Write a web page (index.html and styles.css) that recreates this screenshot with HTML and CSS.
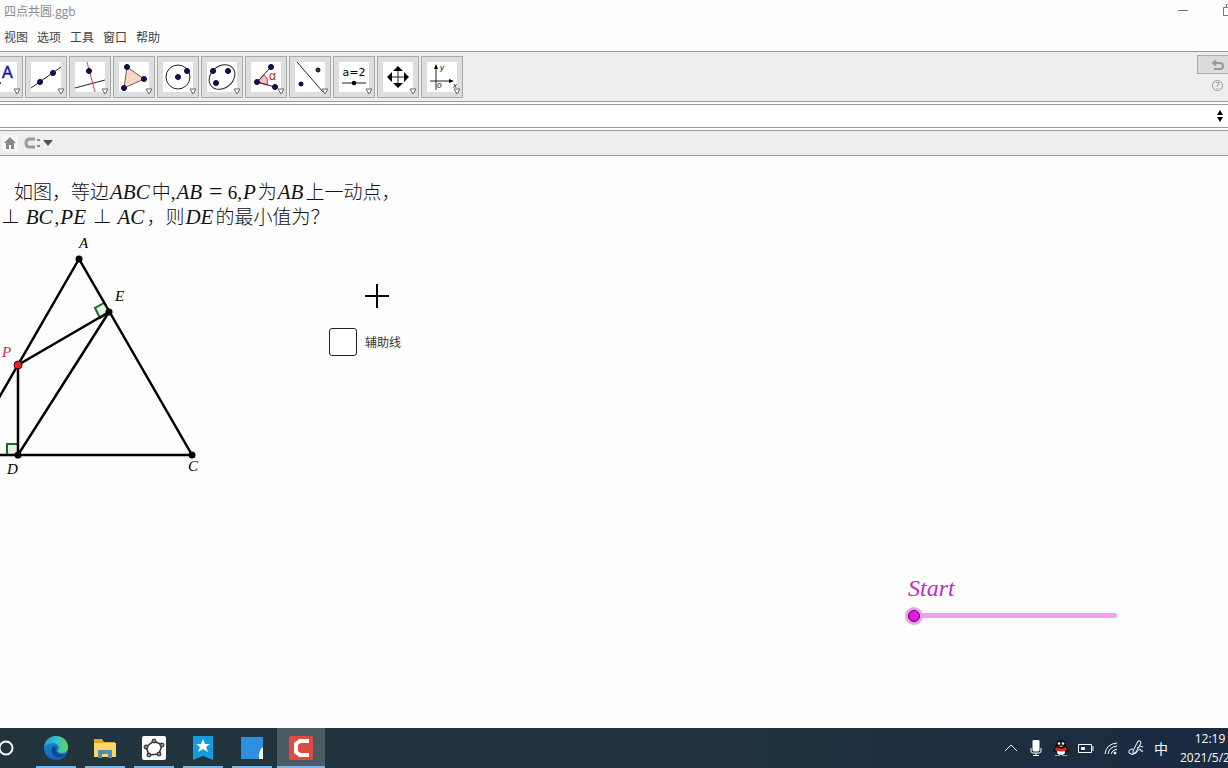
FILE: index.html
```
<!DOCTYPE html>
<html lang="zh-CN">
<head>
    <meta charset="utf-8">
    <title>四点共圆.ggb</title>
    <link rel="stylesheet" href="styles.css">
</head>
<body>
    <header class="titlebar">
        <span class="file-name">四点共圆.ggb</span>
        <div class="window-buttons">
            <button aria-label="最小化"><svg width="12" height="12"><path d="M1 6.500h10" /></svg></button>
            <button aria-label="还原"><svg width="12" height="12"><path d="M1.500 3.500h8v8h-8zM4.500 3v-2.500h8v8h-3" /></svg></button>
        </div>
    </header>

    <nav class="menu">
        <a href="#">视图</a>
        <a href="#">选项</a>
        <a href="#">工具</a>
        <a href="#">窗口</a>
        <a href="#">帮助</a>
    </nav>

    <div class="toolbar">
        <div class="tools">
            <button class="tool" aria-label="文本">
                <svg class="icon" viewBox="0 0 30 30"><text class="letter" x="15" y="16">A</text><circle cx="13" cy="21" r="1" /></svg>
                <svg class="more" viewBox="0 0 8 7"><path d="M1 1h6L4 6z" /></svg>
            </button>
            <button class="tool" aria-label="直线">
                <svg class="icon" viewBox="0 0 30 30"><path d="M0 26L30 5" /><circle class="dot" cx="9" cy="20" r="2.500" /><circle class="dot" cx="22" cy="11" r="2.500" /></svg>
                <svg class="more" viewBox="0 0 8 7"><path d="M1 1h6L4 6z" /></svg>
            </button>
            <button class="tool" aria-label="垂线">
                <svg class="icon" viewBox="0 0 30 30"><path d="M0 26L30 18" /><path class="red" d="M12 0L20 30" /><circle class="dot" cx="14" cy="9" r="2.500" /></svg>
                <svg class="more" viewBox="0 0 8 7"><path d="M1 1h6L4 6z" /></svg>
            </button>
            <button class="tool" aria-label="多边形">
                <svg class="icon" viewBox="0 0 30 30"><path class="area" d="M8 5L25 17L5 26z" /><circle class="dot" cx="8" cy="5" r="2.500" /><circle class="dot" cx="25" cy="17" r="2.500" /><circle class="dot" cx="5" cy="26" r="2.500" /></svg>
                <svg class="more" viewBox="0 0 8 7"><path d="M1 1h6L4 6z" /></svg>
            </button>
            <button class="tool" aria-label="圆">
                <svg class="icon" viewBox="0 0 30 30"><circle class="line" cx="15" cy="15" r="12" /><circle class="dot" cx="15" cy="15" r="2.500" /><circle class="dot" cx="24" cy="9" r="2.500" /></svg>
                <svg class="more" viewBox="0 0 8 7"><path d="M1 1h6L4 6z" /></svg>
            </button>
            <button class="tool" aria-label="椭圆">
                <svg class="icon" viewBox="0 0 30 30"><ellipse class="line" cx="15" cy="15" rx="14" ry="11" transform="rotate(-40 15 15)" /><circle class="dot" cx="6" cy="9" r="2.500" /><circle class="dot" cx="21" cy="9" r="2.500" /><circle class="dot" cx="9" cy="21" r="2.500" /></svg>
                <svg class="more" viewBox="0 0 8 7"><path d="M1 1h6L4 6z" /></svg>
            </button>
            <button class="tool" aria-label="角度">
                <svg class="icon" viewBox="0 0 30 30"><path class="angle" d="M6 20L13 13Q18 16 16 23z" /><path d="M20 5L6 20L24 25" /><circle class="dot" cx="20" cy="5" r="2.500" /><circle class="dot" cx="6" cy="20" r="2.500" /><circle class="dot" cx="24" cy="25" r="2.500" /><text class="alpha" x="18" y="18">α</text></svg>
                <svg class="more" viewBox="0 0 8 7"><path d="M1 1h6L4 6z" /></svg>
            </button>
            <button class="tool" aria-label="轴对称">
                <svg class="icon" viewBox="0 0 30 30"><path d="M2 0L28 30" /><circle class="dot" cx="6" cy="22" r="2" /><circle class="dot image" cx="23" cy="8" r="2" /></svg>
                <svg class="more" viewBox="0 0 8 7"><path d="M1 1h6L4 6z" /></svg>
            </button>
            <button class="tool" aria-label="滑动条">
                <svg class="icon" viewBox="0 0 30 30"><text class="value" x="15" y="14">a=2</text><path d="M3 21h24" /><circle cx="15" cy="21" r="2.300" /></svg>
                <svg class="more" viewBox="0 0 8 7"><path d="M1 1h6L4 6z" /></svg>
            </button>
            <button class="tool" aria-label="移动视图">
                <svg class="icon" viewBox="0 0 30 30"><path d="M15 6v19M6 15h19" /><path class="fill" d="M15 4l5 5h-10zM15 26l5-5h-10zM4 15l5-5v10zM26 15l-5-5v10z" /></svg>
                <svg class="more" viewBox="0 0 8 7"><path d="M1 1h6L4 6z" /></svg>
            </button>
            <button class="tool" aria-label="坐标轴">
                <svg class="icon" viewBox="0 0 30 30"><path d="M9 4v24M3 19h22" /><path class="fill" d="M9 2l2 5h-4zM27 19l-5-2v4z" /><text class="axis" x="13" y="8">y</text><text class="axis" x="10" y="26">0</text><text class="axis" x="26" y="26">x</text></svg>
                <svg class="more" viewBox="0 0 8 7"><path d="M1 1h6L4 6z" /></svg>
            </button>
        </div>
        <div class="side-tools">
            <button class="undo" aria-label="撤销"><svg width="12" height="10"><path d="M1 3h7q3 0 3 3t-3 3h-6M4 .5L1 3l3 2.500" /></svg></button>
            <button class="help" aria-label="帮助">?</button>
        </div>
    </div>

    <div class="command">
        <input type="text" aria-label="输入">
        <button aria-label="历史"><svg width="6" height="12"><path d="M0 5l3-5 3 5zM0 7h6l-3 5z" /></svg></button>
    </div>

    <div class="stylebar">
        <button aria-label="标准视图"><svg width="12" height="12"><path d="M6 0L12 6h-2v6H7V8H5v4H2V6H0z" /></svg></button>
        <button class="snap" aria-label="吸附">
            <svg width="28" height="12"><path class="magnet" d="M10 2H5q-4 0-4 4t4 4h5" /><path d="M12 2h3v2h-3zM12 8h3v2h-3z" /><path class="arrow" d="M18 3h10l-5 6z" /></svg>
        </button>
    </div>

    <main class="canvas">
        <svg class="figure" viewBox="0 0 230 340">
            <g class="right-angle">
                <path d="M104 147l-9 5 5 10 10-6" />
                <path d="M7 299v-11h11v11z" />
            </g>
            <g class="segments">
                <path d="M79 103L-34 299H192z" />
                <path d="M109 156L18 209V299z" />
            </g>
            <circle cx="79" cy="103" r="3.500" />
            <circle cx="109" cy="156" r="3.500" />
            <circle cx="18" cy="299" r="3.500" />
            <circle cx="192" cy="299" r="3.500" />
            <circle class="moving" cx="18" cy="209" r="4" />
            <text x="79" y="92">A</text>
            <text x="115" y="145">E</text>
            <text class="moving-label" x="2" y="201">P</text>
            <text x="7" y="318">D</text>
            <text x="188" y="315">C</text>
        </svg>

        <div class="problem">
            <p class="indent">如图，等边<i>ABC</i>中,<i>AB</i><span class="sign">=</span>6,<i>P</i>为<i>AB</i>上一动点，</p>
            <p>⊥ <i>BC</i>,<i>PE</i> ⊥ <i>AC</i>，则<i>DE</i>的最小值为？</p>
        </div>

        <svg class="cursor" width="24" height="24"><path d="M12 0v24M0 12h24" /></svg>

        <label class="helper-lines"><input type="checkbox">辅助线</label>

        <div class="slider">
            <label for="start">Start</label>
            <input type="range" id="start" min="0" max="100" value="0">
        </div>
    </main>

    <footer class="taskbar">
        <div class="apps">
            <button class="app" aria-label="Cortana"><svg width="24" height="24"><circle class="ring" cx="11" cy="12" r="6.500" /></svg></button>
            <button class="app open" aria-label="Edge">
                <svg width="24" height="24">
                    <defs>
                        <linearGradient id="edge-top" x1="0" x2="1"><stop offset="0" stop-color="#229ddb" /><stop offset=".5" stop-color="#31c3c7" /><stop offset="1" stop-color="#64d35d" /></linearGradient>
                        <linearGradient id="edge-low" y1="0" y2="1" x2="0"><stop offset="0" stop-color="#1c91d8" /><stop offset="1" stop-color="#1262b5" /></linearGradient>
                    </defs>
                    <circle cx="12" cy="12" r="12" fill="url(#edge-low)" />
                    <path d="M0 11C1 4 6 0 12 0c7 0 12 5 12 11 0 4-3 6-6 6-3 0-5-1-4-3 2-3 0-6-4-7-4 0-8 1-10 4z" fill="url(#edge-top)" />
                    <path d="M9 10c-3 4-1 10 4 11 3 1 6 0 9-3-4 2-10 0-10-4 0-2 1-3 1-3z" fill="#12458f" />
                </svg>
            </button>
            <button class="app open" aria-label="文件资源管理器">
                <svg width="24" height="24"><path d="M1 3h8l2 3h11v15H1z" fill="#dfa92e" /><path d="M1 7h22v14H1z" fill="#fbd66b" /><path d="M5 22v-8h14v8h-4v-4H9v4z" fill="#4c8eb5" /></svg>
            </button>
            <button class="app open" aria-label="GeoGebra">
                <svg width="24" height="24"><rect width="24" height="24" rx="2" fill="#fff" /><path d="M12 5l8 4-3 9-10 1-3-8z" fill="none" stroke="#333" stroke-width="1.500" /><g fill="#8583b5" stroke="#222"><circle cx="12" cy="5" r="2" /><circle cx="20" cy="9" r="2" /><circle cx="17" cy="18" r="2" /><circle cx="7" cy="19" r="2" /><circle cx="4" cy="11" r="2" /></g></svg>
            </button>
            <button class="app open" aria-label="收藏">
                <svg width="24" height="24"><path d="M2 0h20v24l-10-4-10 4z" fill="#159bd9" /><path d="M12 3l2 5h5l-4 3 2 5-5-3-5 3 2-5-4-3h5z" fill="#fff" /></svg>
            </button>
            <button class="app open" aria-label="便笺">
                <svg width="24" height="24"><path d="M1 1h22v10q-5 2-4 12H1z" fill="#2d8fdf" /><path d="M23 11v12h-4q-1-10 4-12z" fill="#f3f8fc" /></svg>
            </button>
            <button class="app open active" aria-label="Camtasia">
                <svg width="24" height="24"><rect width="24" height="24" rx="2" fill="#df4b40" /><path d="M20 5H11L7 8v8l4 3h9" fill="none" stroke="#fff" stroke-width="4" /></svg>
            </button>
        </div>

        <div class="tray">
            <button aria-label="显示隐藏的图标"><svg width="16" height="16"><path d="M2 11l6-6 6 6" /></svg></button>
            <button aria-label="麦克风"><svg width="16" height="16"><rect class="solid" x="5" y="0" width="6" height="11" rx="1" /><path d="M3 8v3q0 2 2 2h6q2 0 2-2V8M8 13v3M5 15.500h6" /></svg></button>
            <button aria-label="QQ">
                <svg width="16" height="16"><path d="M8 0c3 0 5 2 5 5l3 6-3 1-2 4H5l-2-4-3-1 3-6c0-3 2-5 5-5z" fill="#0c0b10" stroke="none" /><ellipse cx="8" cy="12" rx="4" ry="3" fill="#fff" stroke="none" /><path d="M3 7q5 3 10 0l1 3q-6 3-12 0z" fill="#d82d33" stroke="none" /><circle cx="6" cy="3.500" r="1.300" fill="#fff" stroke="none" /><circle cx="10" cy="3.500" r="1.300" fill="#fff" stroke="none" /><path d="M5 6q3-1 6 0l-3 1z" fill="#f3a01e" stroke="none" /><path d="M2 15h5v1H2zM9 15h5v1H9z" fill="#e99730" stroke="none" /></svg>
            </button>
            <button aria-label="电池"><svg width="16" height="16"><path d="M.5 4.500h13v8h-13zM15 6v5" /><path class="solid" d="M3.500 7.500h3v2h-3z" /></svg></button>
            <button aria-label="网络"><svg width="16" height="16"><path d="M2 14Q3 4 14 3M5 14q1-7 9-8M8 14q1-4 6-5" /><circle class="solid" cx="12" cy="13" r="1" /></svg></button>
            <button aria-label="手写笔"><svg width="16" height="16"><path d="M5 11L10 1q3-1 3 2L8 12l-3 2zM5 9q-5 0-4 4 3 3 7 0 4-6 5-3-1 2 2 1M9 8q4-3 6-1" /></svg></button>
            <button class="ime">中</button>
            <div class="clock">
                <time>12:19</time>
                <time>2021/5/2</time>
            </div>
        </div>
    </footer>
</body>
</html>
```
FILE: styles.css
```
* {
    box-sizing: border-box;
}

body {
    margin: 0;
    min-height: 100vh;
    display: flex;
    flex-direction: column;
    overflow: hidden;
    background-color: #fdfdfd;
    color: #333;
    font-family: "Open Sans", "Noto Sans CJK SC", sans-serif;
    font-size: 12px;
}

button {
    margin: 0;
    padding: 0;
    border: none;
    background: none;
    color: inherit;
    font: inherit;
}

svg {
    display: block;
}

/* title and menu */
.titlebar {
    display: flex;
    justify-content: space-between;
    height: 24px;
    padding-left: 4px;
    line-height: 23px;
    color: #8b8b8b;
}

.file-name {
    font-size: 12px;
}

.window-buttons {
    display: flex;
    gap: 33px;
    height: 20px;
    margin-right: -6px;
}

.window-buttons svg {
    fill: none;
    stroke: #777;
}

.menu {
    display: flex;
    gap: 9px;
    height: 27px;
    padding-left: 4px;
    line-height: 28px;
}

.menu a {
    color: #444;
    text-decoration: none;
}

/* tool buttons */
.toolbar {
    display: flex;
    justify-content: space-between;
    height: 51px;
    border: 1px solid #999;
    border-width: 1px 0;
    background-color: #eee;
}

.tools {
    display: flex;
    gap: 2px;
    margin-left: -19px;
    padding-top: 4px;
}

.tool {
    position: relative;
    width: 42px;
    height: 42px;
    padding: 5px;
    border: 1px solid #aaa;
    background-color: #dedede;
}

.icon {
    width: 30px;
    height: 30px;
    background-color: #fff;
    overflow: hidden;
}

.icon path, .icon .line {
    fill: none;
    stroke: #222;
}

.icon .dot {
    fill: #10106a;
    stroke: #050528;
}

.icon .image {
    fill: #6e2028;
}

.icon .red {
    stroke: #d0485c;
}

.icon .area {
    fill: #f5d8c8;
    stroke: #8a5540;
}

.icon .angle {
    fill: #f7bcc8;
    stroke: #b04454;
}

.icon .fill {
    fill: #000;
    stroke: none;
}

.icon text {
    font-family: "Liberation Sans", sans-serif;
}

.icon .letter {
    font-size: 16px;
    fill: #1515a0;
    stroke: #1515a0;
    stroke-width: 0.5;
}

.icon .alpha {
    font-size: 12px;
    fill: #c02020;
}

.icon .value {
    font-family: "DejaVu Sans", sans-serif;
    font-size: 11px;
    text-anchor: middle;
}

.icon .axis {
    font-size: 8px;
    font-style: italic;
}

.more {
    position: absolute;
    right: 1px;
    bottom: 2px;
    width: 8px;
    height: 7px;
    fill: #fff;
    stroke: #666;
}

.side-tools {
    display: flex;
    flex-direction: column;
    gap: 4px;
    width: 31px;
    padding-top: 3px;
}

.undo {
    display: flex;
    align-items: center;
    height: 19px;
    padding-left: 14px;
    border: 1px solid #aaa;
    border-right: none;
    background-color: #dcdcdc;
}

.undo svg {
    fill: none;
    stroke: #999;
    stroke-width: 2;
}

.help {
    width: 11px;
    height: 11px;
    margin: 2px 0 0 15px;
    border: 1px solid #999;
    border-radius: 50%;
    color: #777;
    font-size: 9px;
    line-height: 9px;
}

/* input row */
.command {
    display: flex;
    height: 24px;
    margin: 2px 0;
    border: 1px solid #999;
    border-width: 1px 0;
    background-color: #fff;
}

.command input {
    flex: 1;
    border: none;
    outline: none;
    background: none;
}

.command button {
    padding: 0 5px;
}

.stylebar {
    display: flex;
    align-items: center;
    gap: 5px;
    height: 26px;
    padding-left: 2px;
    border: 1px solid #999;
    border-width: 1px 0;
    background-color: #eee;
}

.stylebar button {
    padding: 2px;
    background-color: #f8f8f8;
}

.stylebar .snap {
    background: none;
}

.stylebar svg {
    fill: #888;
    overflow: visible;
}

.stylebar .magnet {
    fill: none;
    stroke: #999;
    stroke-width: 3;
}

.stylebar .arrow {
    fill: #555;
}

/* drawing area */
.canvas {
    position: relative;
    flex: 1;
    overflow: hidden;
}

.figure {
    position: absolute;
    top: 0;
    left: 0;
    width: 230px;
    height: 340px;
    font-family: "Liberation Serif", serif;
    font-size: 15px;
    font-style: italic;
}

.segments {
    fill: none;
    stroke: #000;
    stroke-width: 2.5;
}

.right-angle {
    fill: #e6f0e6;
    stroke: #176b22;
    stroke-width: 2;
}

.moving {
    fill: #e82222;
    stroke: #400;
}

.moving-label {
    fill: #c8323c;
}

.problem {
    position: absolute;
    top: 23px;
    left: 1px;
    color: #111;
    font-family: "Liberation Serif", "Noto Sans CJK SC", serif;
    font-size: 19px;
    white-space: nowrap;
}

.problem p {
    margin: 0;
    font-weight: 300;
    line-height: 25px;
}

.problem .indent {
    padding-left: 13px;
}

.problem i {
    padding: 0 2px 0 1px;
    font-size: 21px;
}

.problem .sign {
    padding: 0 5px;
    font-size: 24px;
    line-height: 1;
}

.cursor {
    position: absolute;
    top: 128px;
    left: 365px;
    stroke: #000;
    stroke-width: 2;
}

.helper-lines {
    position: absolute;
    top: 172px;
    left: 329px;
    display: flex;
    align-items: center;
    gap: 8px;
}

.helper-lines input {
    appearance: none;
    width: 28px;
    height: 28px;
    margin: 0;
    border: 1px solid #222;
    border-radius: 3px;
    background-color: #fff;
}

.slider {
    position: absolute;
    top: 420px;
    left: 908px;
    width: 209px;
}

.slider label {
    display: block;
    color: #c22cc4;
    font-family: "Liberation Serif", serif;
    font-size: 24px;
    font-style: italic;
    line-height: 24px;
}

.slider input {
    appearance: none;
    display: block;
    width: 100%;
    height: 5px;
    margin: 13px 0 0;
    border-radius: 3px;
    background-color: #eda2ec;
}

.slider input::-webkit-slider-thumb {
    appearance: none;
    width: 12px;
    height: 12px;
    border: 1px solid #4a0a50;
    border-radius: 50%;
    background-color: #e31be0;
    box-shadow: 0 0 0 3px #e9a0ea;
}

/* taskbar */
.taskbar {
    display: flex;
    justify-content: space-between;
    height: 40px;
    background: linear-gradient(to right, #22343c, #20333f 60%, #1a2a42);
    color: #fff;
}

.apps {
    display: flex;
    gap: 1px;
    margin-left: -17px;
}

.app {
    display: flex;
    justify-content: center;
    align-items: center;
    width: 48px;
    background: no-repeat center bottom / 40px 2px;
}

.open {
    background-image: linear-gradient(#76b9ed, #76b9ed);
}

.active {
    background-color: #4b5b63;
    background-size: 100% 2px;
}

.ring {
    fill: none;
    stroke: #fff;
    stroke-width: 2;
}

.tray {
    display: flex;
    align-items: center;
    gap: 9px;
}

.tray svg {
    fill: none;
    stroke: #fff;
}

.tray .solid {
    fill: #fff;
}

.ime {
    width: 16px;
    font-size: 14px;
}

.clock {
    width: 50px;
    padding-left: 2px;
    font-size: 12px;
    line-height: 19px;
    white-space: nowrap;
}

.clock time {
    display: block;
    width: 60px;
    text-align: center;
}

.clock time:last-child {
    text-align: left;
}
```
